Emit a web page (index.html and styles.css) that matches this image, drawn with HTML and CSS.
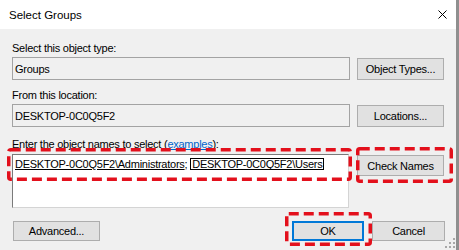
FILE: index.html
```html
<!DOCTYPE html>
<html>
<head>
<meta charset="utf-8">
<link rel="stylesheet" href="styles.css">
</head>
<body>
<div class="window">
  <div class="titlebar">
    <span class="title">Select Groups</span>
    <svg class="close" viewBox="0 0 9 9" width="9" height="9"><path d="M0.5 0.5L8.5 8.5M8.5 0.5L0.5 8.5" stroke="#000" stroke-width="1" fill="none"/></svg>
  </div>
  <div class="content">
    <div class="label l1">Select this object type:</div>
    <div class="row r2">
      <div class="field">Groups</div>
      <div class="btn">Object Types...</div>
    </div>
    <div class="label l2">From this location:</div>
    <div class="row r4">
      <div class="field">DESKTOP-0C0Q5F2</div>
      <div class="btn">Locations...</div>
    </div>
    <div class="label l3">Enter the object names to select (<span class="link">examples</span>):</div>
    <div class="row r6">
      <div class="area"><span class="u">DESKTOP-0C0Q5F2\Administrators</span>; <span class="u sel">DESKTOP-0C0Q5F2\Users</span></div>
      <div class="btn check">Check Names</div>
    </div>
    <div class="row r7">
      <div class="btn adv">Advanced...</div>
      <div class="spacer"></div>
      <div class="btn ok">OK</div>
      <div class="btn cancel">Cancel</div>
    </div>
  </div>
  <svg class="grip" width="12" height="12" viewBox="0 0 12 12">
    <rect x="9" y="1" width="2" height="2" fill="#a8a8a8"/>
    <rect x="5" y="5" width="2" height="2" fill="#a8a8a8"/>
    <rect x="9" y="5" width="2" height="2" fill="#a8a8a8"/>
    <rect x="1" y="9" width="2" height="2" fill="#a8a8a8"/>
    <rect x="5" y="9" width="2" height="2" fill="#a8a8a8"/>
    <rect x="9" y="9" width="2" height="2" fill="#a8a8a8"/>
  </svg>
  <svg class="marks" width="459" height="250" viewBox="0 0 459 250">
    <g fill="none" stroke="#e3101c" stroke-width="3.5" stroke-dasharray="10 5">
      <rect x="8.75" y="149.75" width="341.5" height="29.5" rx="2"/>
      <rect x="357.75" y="148.75" width="93.5" height="32.5" rx="2"/>
      <rect x="286.75" y="213.75" width="83.5" height="30.5" rx="2"/>
    </g>
  </svg>
</div>
</body>
</html>
```

FILE: styles.css
```css
html, body {
  margin: 0;
  padding: 0;
  background: #f0f0f0;
}

.window {
  position: relative;
  width: 456px;
  height: 250px;
  border-right: 3px solid #8f8f8f;
  background: #f0f0f0;
  font-family: "Liberation Sans", Arial, sans-serif;
  font-size: 11px;
  letter-spacing: -0.25px;
  color: #000;
  overflow: hidden;
}

.titlebar {
  height: 29px;
  background: #ffffff;
  display: flex;
  align-items: center;
  justify-content: space-between;
  padding: 0 9px 0 9px;
}

.title {
  font-size: 11.5px;
  letter-spacing: 0;
  line-height: 14px;
}

.close {
  display: block;
}

.content {
  padding-left: 12px;
}

.label {
  height: 14px;
  line-height: 14px;
  white-space: nowrap;
}

.l1 { margin-top: 12px; }
.l2 { margin-top: 8px; }
.l3 { margin-top: 10px; }

.link {
  color: #0066cc;
  text-decoration: underline;
}

.row {
  display: flex;
}

.r2, .r4 {
  margin-top: 2px;
  align-items: flex-end;
}

.field {
  box-sizing: border-box;
  width: 338px;
  height: 23px;
  border: 1px solid #a3a3a3;
  line-height: 22px;
  padding-left: 2px;
  white-space: nowrap;
}

.btn {
  box-sizing: border-box;
  width: 87px;
  height: 22px;
  margin-left: 7px;
  border: 1px solid #adadad;
  background: #e1e1e1;
  display: flex;
  align-items: center;
  justify-content: center;
  white-space: nowrap;
}

.r6 {
  margin-top: 3px;
  align-items: flex-start;
}

.area {
  box-sizing: border-box;
  width: 337px;
  height: 54px;
  background: #ffffff;
  border: 1px solid;
  border-color: #7a7a7a #d4d4d4 #d4d4d4 #7a7a7a;
  padding: 2px 0 0 2px;
  line-height: 14px;
  white-space: nowrap;
  overflow: hidden;
}

.u {
  text-decoration: underline;
}

.sel {
  outline: 1px solid #000;
  outline-offset: -1px;
  padding: 0 2px;
}

.check {
  margin-top: 1px;
  margin-left: 8px;
  height: 21px;
}

.r7 {
  margin-top: 13px;
  width: 433px;
  align-items: center;
}

.r7 .btn {
  height: 20px;
}

.adv {
  margin-left: 1px;
}

.spacer {
  flex: 1;
}

.ok {
  width: 72px;
  margin-left: 0;
  border: 2px solid #0078d7;
}

.cancel {
  width: 73px;
  margin-left: 8px;
}

.grip {
  position: absolute;
  right: 0;
  bottom: 1px;
}

.marks {
  position: absolute;
  left: 0;
  top: 0;
  pointer-events: none;
}
```
